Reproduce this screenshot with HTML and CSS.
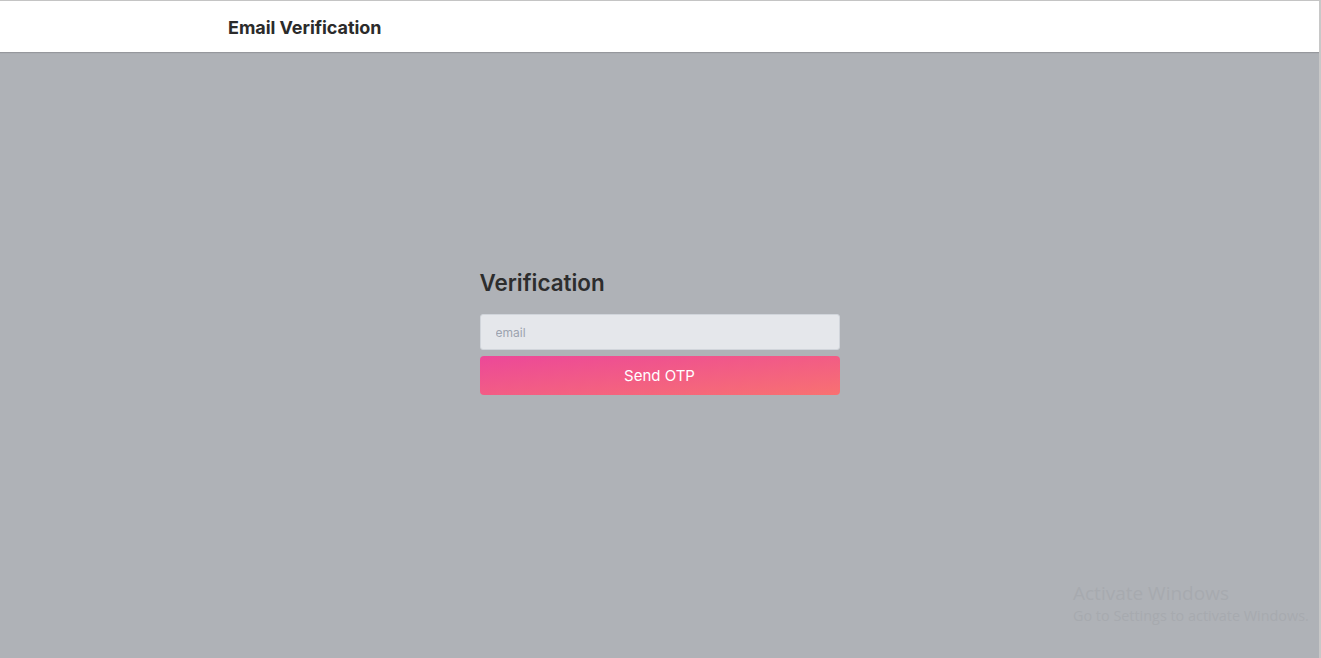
FILE: index.html
```html
<!DOCTYPE html>
<html lang="en">
<head>
<meta charset="utf-8">
<title>Email Verification</title>
<link rel="stylesheet" href="styles.css">
</head>
<body>
<div class="page">
  <header class="topbar">
    <h1 class="brand">Email Verification</h1>
  </header>
  <main class="main">
    <form class="card">
      <h2 class="card-title">Verification</h2>
      <input class="field" type="email" placeholder="email">
      <button class="btn" type="button">Send OTP</button>
    </form>
    <div class="watermark">
      <div class="wm-title">Activate Windows</div>
      <div class="wm-sub">Go to Settings to activate Windows.</div>
    </div>
  </main>
</div>
</body>
</html>
```

FILE: styles.css
```css
html, body {
  margin: 0;
  padding: 0;
  height: 100%;
}
body {
  font-family: Inter, "Noto Sans", "Liberation Sans", sans-serif;
  background: #afb2b7;
}
.page {
  height: 658px;
  box-sizing: border-box;
  border-top: 1px solid #c4c4c4;
  border-right: 2px solid #c8c8c8;
  display: flex;
  flex-direction: column;
  overflow: hidden;
}
.topbar {
  height: 51px;
  flex: none;
  background: #ffffff;
  box-shadow: 0 1px 1px rgba(0,0,0,0.14);
  display: flex;
  align-items: center;
  padding-left: 228px;
  padding-top: 2px;
  box-sizing: border-box;
  position: relative;
  z-index: 1;
}
.brand {
  margin: 0;
  font-size: 18px;
  font-weight: 700;
  color: #2b2b2b;
  letter-spacing: -0.05px;
}
.main {
  flex: 1;
  position: relative;
  display: flex;
  justify-content: center;
  padding-top: 215px;
}
.card {
  width: 360px;
  display: flex;
  flex-direction: column;
}
.card-title {
  margin: 0 0 15px;
  font-size: 22.4px;
  line-height: 32px;
  font-weight: 600;
  color: #2d2d2d;
}
.field {
  height: 36px;
  box-sizing: border-box;
  border: 1px solid #d1d5db;
  border-radius: 3px;
  background: #e5e7eb;
  padding: 0 15px;
  font-family: inherit;
  font-size: 12px;
  color: #374151;
  outline: none;
}
.field::placeholder {
  color: #9ca3af;
}
.btn {
  margin-top: 6px;
  height: 39px;
  border: none;
  border-radius: 4px;
  background: linear-gradient(to bottom right, #ec4899 0%, #f87171 100%);
  color: #ffffff;
  font-family: inherit;
  font-size: 15px;
  cursor: pointer;
}
.watermark {
  position: absolute;
  left: 1073px;
  top: 529px;
  color: #a7aaaf;
  font-family: "Open Sans", "Noto Sans", sans-serif;
}
.wm-title {
  font-size: 19px;
  line-height: 24px;
}
.wm-sub {
  font-size: 14.4px;
  line-height: 21px;
}
```
